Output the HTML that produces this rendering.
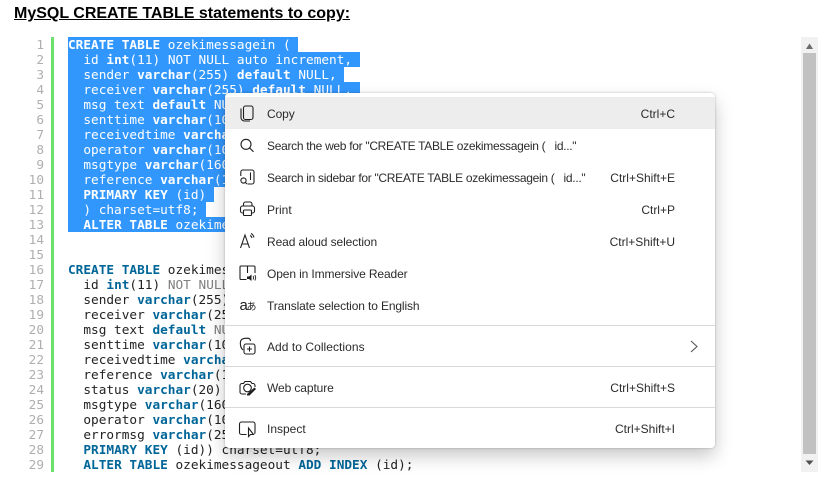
<!DOCTYPE html>
<html><head><meta charset="utf-8">
<style>
html,body{margin:0;padding:0;width:825px;height:480px;background:#fff;overflow:hidden}
#t{position:absolute;left:14px;top:4px;font:bold 16px/19px "Liberation Sans",sans-serif;color:#000;text-decoration:underline;white-space:pre}
.num,.ln{position:absolute;height:15px;line-height:17px;font-family:"DejaVu Sans Mono",monospace;font-size:12.750px;white-space:pre}
.num{left:0;width:44px;text-align:right;color:#afafaf}
.ln{left:68px;color:#222}
.ln b{color:#069;font-weight:bold}
.ln i{color:#808080;font-style:normal}
.s{background:#3297fd;color:#fff;display:inline-block;height:15px;vertical-align:top}
.s b,.s i{color:#fff}
.hid{color:transparent;text-decoration:none}
#bar{position:absolute;left:51px;top:37px;width:3px;height:435px;background:#6ce26c}
#track{position:absolute;left:801px;top:37px;width:17px;height:435px;background:#f1f1f1}
#thumb{position:absolute;left:2px;top:16px;width:13px;height:401px;background:#c1c1c1}
#track svg{position:absolute;left:0;width:17px;height:17px}
#menu{position:absolute;left:225px;top:93px;width:490px;height:355px;background:#fff;border-radius:4px;box-shadow:0 0 2px rgba(0,0,0,.25),0 8px 18px rgba(0,0,0,.22)}
.r{position:absolute;left:0;width:490px;height:32px;line-height:32px;font-family:"Liberation Sans",sans-serif;font-size:12px;color:#2b2b2b}
.r span{position:absolute;left:42px;top:1px;white-space:pre}
.r em{position:absolute;right:40px;top:1px;font-style:normal;white-space:pre}
.h{background:#ededed}
.sep{position:absolute;left:0;width:490px;height:1px;background:#d9d9d9}
#ic{position:absolute;left:0;top:0;width:825px;height:480px;pointer-events:none}
</style></head><body>
<div id="t">MySQL CREATE TABLE statements to copy:</div>
<div id="bar"></div>

<div class="num" style="top:37px">1</div><div class="num" style="top:52px">2</div><div class="num" style="top:67px">3</div><div class="num" style="top:82px">4</div><div class="num" style="top:97px">5</div><div class="num" style="top:112px">6</div><div class="num" style="top:127px">7</div><div class="num" style="top:142px">8</div><div class="num" style="top:157px">9</div><div class="num" style="top:172px">10</div><div class="num" style="top:187px">11</div><div class="num" style="top:202px">12</div><div class="num" style="top:217px">13</div><div class="num" style="top:232px">14</div><div class="num" style="top:247px">15</div><div class="num" style="top:262px">16</div><div class="num" style="top:277px">17</div><div class="num" style="top:292px">18</div><div class="num" style="top:307px">19</div><div class="num" style="top:322px">20</div><div class="num" style="top:337px">21</div><div class="num" style="top:352px">22</div><div class="num" style="top:367px">23</div><div class="num" style="top:382px">24</div><div class="num" style="top:397px">25</div><div class="num" style="top:412px">26</div><div class="num" style="top:427px">27</div><div class="num" style="top:442px">28</div><div class="num" style="top:457px">29</div>

<div class="ln" style="top:37px"><span class="s"><b>CREATE TABLE</b> ozekimessagein ( </span></div>
<div class="ln" style="top:52px"><span class="s">  id <b>int</b>(11) <i>NOT NULL</i> auto<u class="hid">_</u>increment, </span></div>
<div class="ln" style="top:67px"><span class="s">  sender <b>varchar</b>(255) <b>default</b> <i>NULL</i>, </span></div>
<div class="ln" style="top:82px"><span class="s">  receiver <b>varchar</b>(255) <b>default</b> <i>NULL</i>, </span></div>
<div class="ln" style="top:97px"><span class="s">  msg text <b>default</b> <i>NULL</i>, </span></div>
<div class="ln" style="top:112px"><span class="s">  senttime <b>varchar</b>(100) <b>default</b> <i>NULL</i>, </span></div>
<div class="ln" style="top:127px"><span class="s">  receivedtime <b>varchar</b>(100) <b>default</b> <i>NULL</i>, </span></div>
<div class="ln" style="top:142px"><span class="s">  operator <b>varchar</b>(100) <b>default</b> <i>NULL</i>, </span></div>
<div class="ln" style="top:157px"><span class="s">  msgtype <b>varchar</b>(160) <b>default</b> <i>NULL</i>, </span></div>
<div class="ln" style="top:172px"><span class="s">  reference <b>varchar</b>(100) <b>default</b> <i>NULL</i>, </span></div>
<div class="ln" style="top:187px"><span class="s">  <b>PRIMARY KEY</b> (id) </span></div>
<div class="ln" style="top:202px"><span class="s">  ) charset=utf8; </span></div>
<div class="ln" style="top:217px"><span class="s">  <b>ALTER TABLE</b> ozekimessagein <b>ADD INDEX</b> (id); </span></div>

<div class="ln" style="top:262px"><b>CREATE TABLE</b> ozekimessageout (</div>
<div class="ln" style="top:277px">  id <b>int</b>(11) <i>NOT NULL</i> auto_increment,</div>
<div class="ln" style="top:292px">  sender <b>varchar</b>(255) <b>default</b> <i>NULL</i>,</div>
<div class="ln" style="top:307px">  receiver <b>varchar</b>(255) <b>default</b> <i>NULL</i>,</div>
<div class="ln" style="top:322px">  msg text <b>default</b> <i>NULL</i>,</div>
<div class="ln" style="top:337px">  senttime <b>varchar</b>(100) <b>default</b> <i>NULL</i>,</div>
<div class="ln" style="top:352px">  receivedtime <b>varchar</b>(100) <b>default</b> <i>NULL</i>,</div>
<div class="ln" style="top:367px">  reference <b>varchar</b>(100) <b>default</b> <i>NULL</i>,</div>
<div class="ln" style="top:382px">  status <b>varchar</b>(20) <b>default</b> <i>NULL</i>,</div>
<div class="ln" style="top:397px">  msgtype <b>varchar</b>(160) <b>default</b> <i>NULL</i>,</div>
<div class="ln" style="top:412px">  operator <b>varchar</b>(100) <b>default</b> <i>NULL</i>,</div>
<div class="ln" style="top:427px">  errormsg <b>varchar</b>(250) <b>default</b> <i>NULL</i>,</div>
<div class="ln" style="top:442px">  <b>PRIMARY KEY</b> (id)) charset=utf8;</div>
<div class="ln" style="top:457px">  <b>ALTER TABLE</b> ozekimessageout <b>ADD INDEX</b> (id);</div>

<div id="track">
<svg style="top:0" viewBox="0 0 17 17"><path d="M5 12L8.500 6.500L12 12Z" fill="#6b6b6b"/></svg>
<div id="thumb"></div>
<svg style="top:418px" viewBox="0 0 17 17"><path d="M4.500 5.500H12.500L8.500 10Z" fill="#505050"/></svg>
</div>

<div id="menu">
<div class="r h" style="top:4px"><span style="letter-spacing:-.1px">Copy</span><em>Ctrl+C</em></div>
<div class="r" style="top:36px"><span style="letter-spacing:-.3px">Search the web for "CREATE TABLE ozekimessagein (   id..."</span></div>
<div class="r" style="top:68px"><span style="letter-spacing:-.3px">Search in sidebar for "CREATE TABLE ozekimessagein (   id..."</span><em>Ctrl+Shift+E</em></div>
<div class="r" style="top:100px"><span>Print</span><em>Ctrl+P</em></div>
<div class="r" style="top:132px"><span style="letter-spacing:-.1px">Read aloud selection</span><em>Ctrl+Shift+U</em></div>
<div class="r" style="top:164px"><span style="letter-spacing:-.12px">Open in Immersive Reader</span></div>
<div class="r" style="top:196px"><span style="letter-spacing:-.13px">Translate selection to English</span></div>
<div class="sep" style="top:232px"></div>
<div class="r" style="top:237px"><span style="letter-spacing:.05px">Add to Collections</span></div>
<div class="sep" style="top:273px"></div>
<div class="r" style="top:278px"><span style="letter-spacing:-.1px">Web capture</span><em>Ctrl+Shift+S</em></div>
<div class="sep" style="top:314px"></div>
<div class="r" style="top:319px"><span>Inspect</span><em>Ctrl+Shift+I</em></div>
</div>

<svg id="ic" viewBox="0 0 825 480" fill="none" stroke="#1f1f1f" stroke-width="1.100">
<path d="M245.500 106H251a2 2 0 0 1 2 2V117.500a2 2 0 0 1-2 2H245.500a2 2 0 0 1-2-2V108a2 2 0 0 1 2-2Z"/>
<path d="M241 108.500V117.500a3.500 3.500 0 0 0 3.500 3.500H250"/>
<circle cx="246" cy="144.300" r="5"/><path d="M249.700 148L253.500 151.800"/>
<path d="M240.800 176V172a2 2 0 0 1 2-2H252a2 2 0 0 1 2 2V182a2 2 0 0 1-2 2H247.500"/>
<path d="M250.500 172.500V180"/>
<circle cx="243.500" cy="180.500" r="2.600"/><path d="M245.400 182.400L247 184"/>
<path d="M243.500 206V204a2 2 0 0 1 2-2H250a2 2 0 0 1 2 2V206"/>
<path d="M243.500 213H242.500a2 2 0 0 1-2-2V208a2 2 0 0 1 2-2H252.500a2 2 0 0 1 2 2V211a2 2 0 0 1-2 2H251.500"/>
<rect x="243.500" y="210" width="8" height="5.500" rx="1"/>
<path d="M240.500 248L245 235L249.500 248M242 244H248"/>
<path d="M250 235.500a3.500 3.500 0 0 1 2 2.500M251 233.500a6 6 0 0 1 3 4" stroke-width="1"/>
<path d="M246.500 279.500H241a1 1 0 0 1-1-1V267a1 1 0 0 1 1-1H254a1 1 0 0 1 1 1V273"/>
<path d="M247.500 266V273"/>
<path d="M247 276.500H249L251.500 274.500V281L249 279H247Z" fill="#1f1f1f" stroke="none"/>
<path d="M253 276a3 3 0 0 1 0 3.500M254.800 275a5 5 0 0 1 0 5.500" stroke-width=".9"/>
<text x="239.500" y="310" font-family="Liberation Sans,sans-serif" font-size="15" fill="#1f1f1f" stroke="none">a</text>
<text x="246.500" y="310" font-family="Noto Sans CJK JP,sans-serif" font-size="10" fill="#1f1f1f" stroke="none">あ</text>
<rect x="244" y="344" width="11" height="10" rx="2"/>
<path d="M249.500 346.500V351.500M247 349H252"/>
<path d="M243 350C240.500 348 240 344 240.500 341.500C241 339.500 243 338.500 245 338.300L248 338.200C249.500 338.300 250.300 339.500 250.500 341"/>
<path d="M246 394H242a2 2 0 0 1-2-2V385.500a2 2 0 0 1 2-2H243.500L245 381.500H250.500L252 383.500H253a2 2 0 0 1 2 2V387"/>
<circle cx="247.500" cy="388" r="3.800"/>
<path d="M247 394L254.500 387.500L256 389L249.500 395.500H247Z" fill="#1f1f1f" stroke="none"/>
<path d="M246.500 434.500H241.500a2 2 0 0 1-2-2V424a2 2 0 0 1 2-2H253a2 2 0 0 1 2 2V432.500a2 2 0 0 1-.5 1.300"/>
<path d="M248.500 428V436.500L250.500 434.500H253.500Z" fill="#fff"/>
<path d="M691 341L697 346.500L691 352" stroke="#555" stroke-width="1.100"/>
</svg>
</body></html>
